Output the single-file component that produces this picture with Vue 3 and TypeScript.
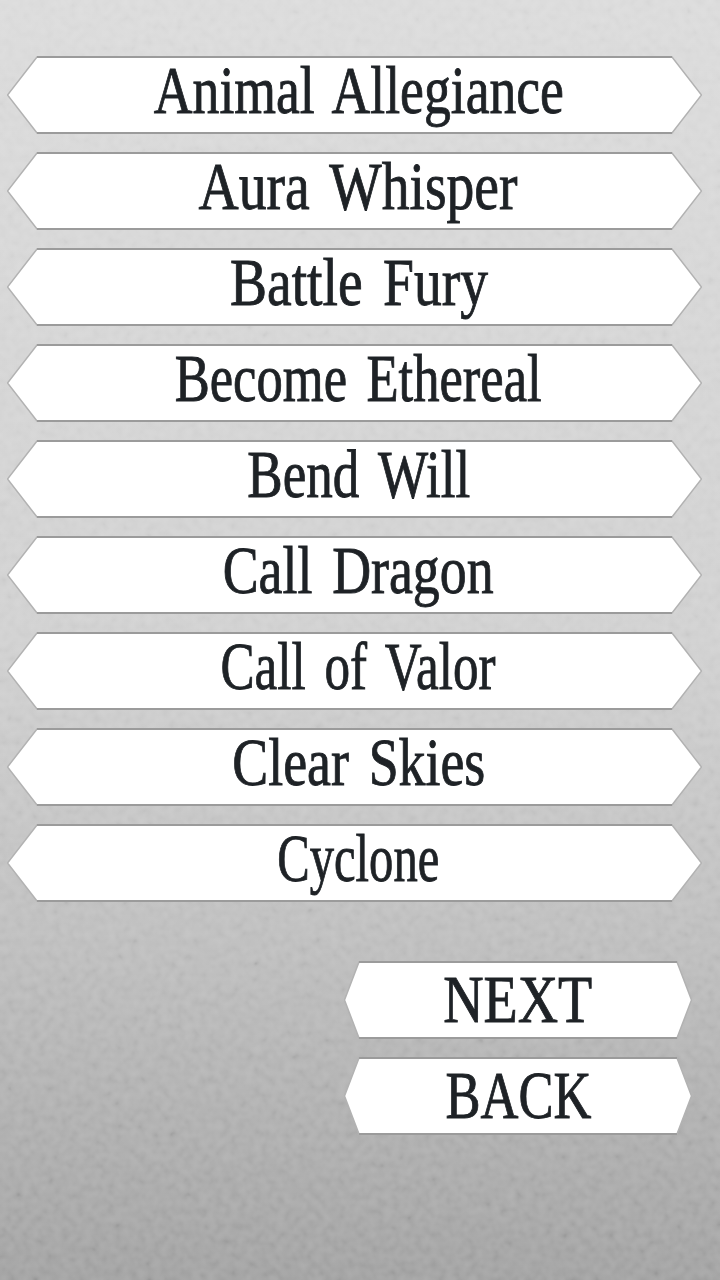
<script setup lang="ts">
interface Choice {
  label: string
  target: number
}

const FONT_SIZE = 68
const WORD_GAP = 8
const FONT = `${FONT_SIZE}px "Liberation Serif"`

const spells: Choice[] = [
  { label: 'Animal Allegiance', target: 413 },
  { label: 'Aura Whisper', target: 320 },
  { label: 'Battle Fury', target: 258 },
  { label: 'Become Ethereal', target: 367 },
  { label: 'Bend Will', target: 224 },
  { label: 'Call Dragon', target: 271 },
  { label: 'Call of Valor', target: 276 },
  { label: 'Clear Skies', target: 253 },
  { label: 'Cyclone', target: 162 },
]
const actions: Choice[] = [
  { label: 'NEXT', target: 149 },
  { label: 'BACK', target: 146 },
]

const ctx = document.createElement('canvas').getContext('2d')

function squeeze(item: Choice): string {
  if (!ctx) return 'none'
  ctx.font = FONT
  const spaces = item.label.split(' ').length - 1
  const width = ctx.measureText(item.label).width + spaces * WORD_GAP
  return `scaleX(${(item.target / width).toFixed(4)})`
}
</script>

<template>
  <main class="page">
    <svg class="grain" aria-hidden="true" width="720" height="1280">
      <filter id="paper" x="0" y="0" width="100%" height="100%">
        <feTurbulence type="fractalNoise" baseFrequency="0.13" numOctaves="3" seed="7" />
        <feGaussianBlur stdDeviation="0.8" />
        <feColorMatrix
          type="matrix"
          values="1.4 0 0 0 -0.2  1.4 0 0 0 -0.2  1.4 0 0 0 -0.2  0 0 0 0 1"
        />
      </filter>
      <rect width="720" height="1280" filter="url(#paper)" />
    </svg>

    <section class="list">
      <button v-for="s in spells" :key="s.label" class="plate wide" type="button">
        <svg class="shape" viewBox="0 0 695 78" aria-hidden="true">
          <polygon class="fill" points="30,1 665,1 694.5,39 665,77 30,77 0.5,39" />
          <path class="edge" d="M30 1H665M30 77H665" />
        </svg>
        <span class="label" :style="{ transform: squeeze(s) }">{{ s.label }}</span>
      </button>
    </section>

    <section class="actions">
      <button v-for="a in actions" :key="a.label" class="plate narrow" type="button">
        <svg class="shape" viewBox="0 0 348 78" aria-hidden="true">
          <polygon class="fill" points="15,1 333,1 347.5,39 333,77 15,77 0.5,39" />
          <path class="edge" d="M15 1H333M15 77H333" />
        </svg>
        <span class="label low" :style="{ transform: squeeze(a) }">{{ a.label }}</span>
      </button>
    </section>
  </main>
</template>

<style>
html,
body {
  margin: 0;
  padding: 0;
}
</style>

<style scoped>
.page {
  position: relative;
  width: 720px;
  height: 1280px;
  overflow: hidden;
  box-sizing: border-box;
  padding: 56px 18px 0 7px;
  background: linear-gradient(180deg, #dadada 0%, #cfcfcf 50%, #bbbbbb 75%, #a0a0a0 100%);
}
.grain {
  position: absolute;
  inset: 0;
  mix-blend-mode: soft-light;
  opacity: 0.3;
}
.list,
.actions {
  position: relative;
  display: flex;
  flex-direction: column;
  gap: 18px;
}
.actions {
  margin-top: 59px;
  margin-right: 10px;
  align-items: flex-end;
}
.plate {
  position: relative;
  display: flex;
  justify-content: center;
  height: 78px;
  padding: 0;
  border: 0;
  background: none;
  font-family: "Liberation Serif", "DejaVu Serif", serif;
  color: #1e2226;
}
.wide {
  width: 695px;
}
.narrow {
  width: 348px;
}
.shape {
  position: absolute;
  inset: 0;
  width: 100%;
  height: 100%;
}
.fill {
  fill: #ffffff;
  stroke: #b2b2b2;
  stroke-width: 1.5;
}
.edge {
  fill: none;
  stroke: #9b9b9b;
  stroke-width: 2;
}
.label {
  position: relative;
  left: 4px;
  display: inline-block;
  font-size: 68px;
  line-height: 68px;
  white-space: nowrap;
  word-spacing: 8px;
  -webkit-text-stroke: 0.9px #1e2226;
}
.low {
  margin-top: 4px;
  left: 0;
}
</style>
